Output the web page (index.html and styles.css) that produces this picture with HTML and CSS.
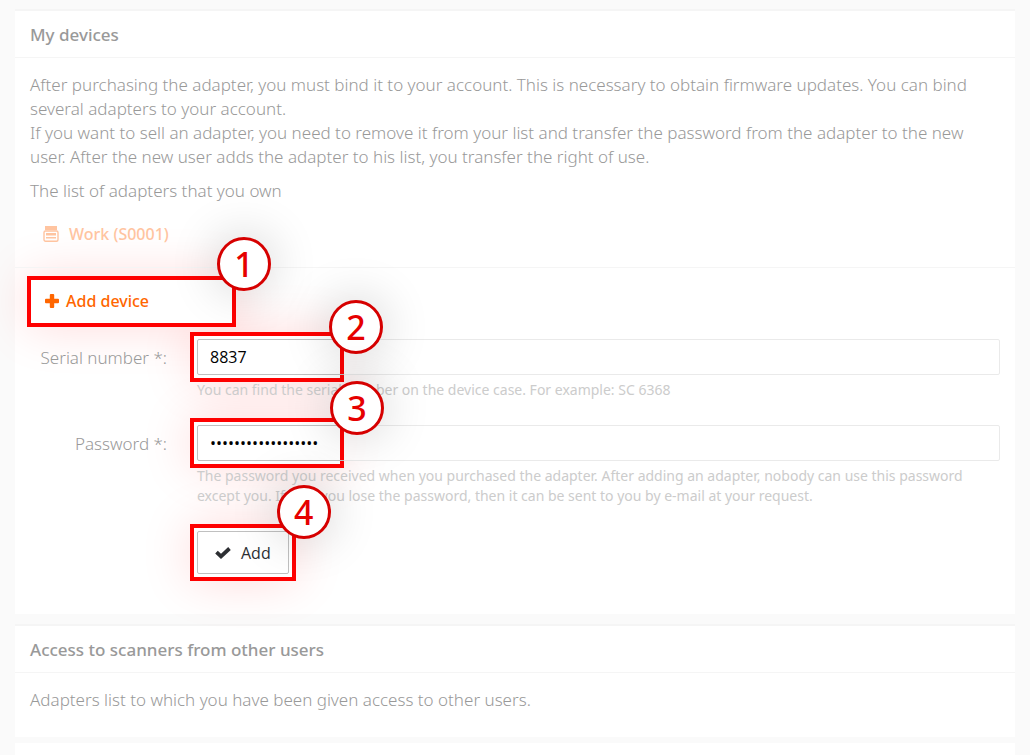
FILE: index.html
```html
<!DOCTYPE html>
<html lang="en">
<head>
  <meta charset="UTF-8" />
  <meta name="viewport" content="width=device-width, initial-scale=1.0" />
  <title>My devices</title>
  <link rel="stylesheet" href="styles.css">
</head>
<body>
  <main class="page">
    <section class="card devices">
      <h2 class="card-title">My devices</h2>
      <div class="card-body">
        <p>After purchasing the adapter, you must bind it to your account. This is necessary to obtain firmware updates. You can bind several adapters to your account.<br />If you want to sell an adapter, you need to remove it from your list and transfer the password from the adapter to the new user. After the new user adds the adapter to his list, you transfer the right of use.</p>
        <p>The list of adapters that you own</p>
        <a class="device-link" href="#">
          <svg width="16" height="16" viewBox="0 0 16 16" aria-hidden="true">
            <path fill="currentColor" d="M2 0h12v4.200H2z" />
            <rect x="1" y="5" width="14" height="10.300" rx="1.500" fill="none" stroke="currentColor" stroke-width="1.400" />
            <path fill="currentColor" d="M3 7h10v2.400H3zM3 11h10v1.400H3z" />
          </svg>
          Work (S0001)
        </a>
      </div>

      <div class="add-panel">
        <div class="step step-add">
          <a class="add-link" href="#device-form">
            <svg width="14" height="14" viewBox="0 0 14 14" aria-hidden="true">
              <path fill="currentColor" d="M5.800 0h2.400q1 0 1 1v3.800H13q1 0 1 1v2.400q0 1-1 1H9.200V13q0 1-1 1H5.800q-1 0-1-1V9.200H1q-1 0-1-1V5.800q0-1 1-1h3.800V1q0-1 1-1z" />
            </svg>
            Add device
          </a>
          <span class="badge">1</span>
        </div>

        <form id="device-form" class="device-form">
          <label for="serial">Serial number *:</label>
          <div class="field">
            <div class="control">
              <input type="text" id="serial" value="8837" />
              <div class="step step-input"><span class="badge badge-low">2</span></div>
            </div>
            <p class="help">You can find the serial number on the device case. For example: SC 6368</p>
          </div>

          <label for="password">Password *:</label>
          <div class="field">
            <div class="control">
              <input type="password" id="password" value="adapterpassword123" />
              <div class="step step-input"><span class="badge badge-side">3</span></div>
            </div>
            <p class="help">The password you received when you purchased the adapter. After adding an adapter, nobody can use this password except you. If ever you lose the password, then it can be sent to you by e-mail at your request.</p>
          </div>

          <div class="step step-submit">
            <button type="submit">
              <svg width="16" height="12" viewBox="0 0 16 12" aria-hidden="true">
                <path fill="none" stroke="currentColor" stroke-width="3.800" d="M1.500 5.200l4.500 4.200L14.500 1.500" />
              </svg>
              Add
            </button>
            <span class="badge">4</span>
          </div>
        </form>
      </div>
    </section>

    <section class="card">
      <h2 class="card-title">Access to scanners from other users</h2>
      <div class="card-body">
        <p>Adapters list to which you have been given access to other users.</p>
      </div>
    </section>

    <section class="card card-next"></section>
  </main>
</body>
</html>
```
FILE: styles.css
```css
* {
  box-sizing: border-box;
}

body {
  margin: 0;
  background: #fafafa;
  color: #999;
  font-family: "Noto Sans", "Open Sans", sans-serif;
  font-size: 17px;
  font-weight: 300;
  line-height: 24px;
  overflow: hidden;
}

.page {
  padding: 9px 15px 0;
}

.card {
  margin-bottom: 10px;
  border-top: 2px solid #f5f5f5;
  background: #fff;
}

.devices {
  position: relative;
  isolation: isolate;
  background: none;
}

/* card surface, kept under the glow of the steps */
.devices::before {
  content: "";
  position: absolute;
  inset: 0;
  z-index: -2;
  background: #fff;
}

.card-title {
  margin: 0;
  padding: 12px 15px 10px;
  border-bottom: 1px solid #f5f5f5;
  font-size: 17px;
  font-weight: 500;
}

.card-body {
  padding: 15px 15px 20px;
}

.card-body p {
  margin: 0 0 10px;
}

.card-body p:last-child {
  margin-bottom: 5px;
}

.device-link,
.add-link {
  display: flex;
  align-items: center;
  font-size: 16px;
  font-weight: 500;
  text-decoration: none;
}

.device-link {
  gap: 10px;
  width: fit-content;
  margin-top: 19px;
  padding-left: 13px;
  color: #ffc4a0;
}

.add-link {
  gap: 7px;
  color: #ff6600;
}

.add-panel {
  margin-top: 1px;
  padding: 8px 15px 33px 12px;
  border-top: 1px solid #f5f5f5;
}

/* highlighted steps */
.step {
  position: relative;
  width: fit-content;
  border: 4px solid #ff0000;
  background: #fff;
}

.step::before {
  content: "";
  position: absolute;
  inset: -4px;
  z-index: -1;
  box-shadow: 0 0 50px rgba(255, 0, 0, 0.15);
}

.step-add {
  width: 209px;
  padding: 9px 14px 10px;
}

.badge {
  position: absolute;
  top: -43px;
  right: -39px;
  z-index: 3;
  width: 54px;
  height: 54px;
  border: 3px solid #d60000;
  border-radius: 50%;
  background: #fff;
  box-shadow: 0 0 50px rgba(0, 0, 0, 0.2);
  color: #e60000;
  font-size: 34px;
  font-weight: 500;
  line-height: 48px;
  text-align: center;
}

.badge-low {
  top: -36px;
  right: -43px;
}

.badge-side {
  top: -41px;
  right: -44px;
}

.device-form {
  display: grid;
  grid-template-columns: 140px 1fr;
  column-gap: 30px;
  row-gap: 25px;
  padding-top: 12px;
}

.device-form label {
  padding-top: 7px;
  text-align: right;
}

.control {
  position: relative;
}

.control input {
  position: relative;
  z-index: 1;
  display: block;
  width: 100%;
  height: 36px;
  padding: 0 12px;
  border: 1px solid #c0c0c0;
  border-radius: 2px;
  background: none;
  color: #000;
  font: 500 16px "Open Sans", "Noto Sans", sans-serif;
}

/* fades the part of the input outside the step */
.control::after {
  content: "";
  position: absolute;
  inset: 0 0 0 147px;
  z-index: 1;
  background: rgba(255, 255, 255, 0.66);
}

.step-input {
  position: absolute;
  inset: -7px auto -7px -7px;
  width: 154px;
}

.help {
  margin: 5px 0 0;
  color: #ccc;
  font-size: 14px;
  font-weight: 400;
  line-height: 20px;
}

.step-submit {
  grid-column: 2;
  margin: -7px 0 0 -7px;
  padding: 3px;
}

.step-submit button {
  display: flex;
  align-items: center;
  gap: 10px;
  height: 43px;
  padding: 0 17px;
  border: 1px solid #c0c0c0;
  border-radius: 2px;
  background: #fff;
  color: #2d2f33;
  font: 500 16px "Open Sans", "Noto Sans", sans-serif;
}

.card-next {
  height: 20px;
  margin-top: -4px;
  border-top: 0;
}
```
